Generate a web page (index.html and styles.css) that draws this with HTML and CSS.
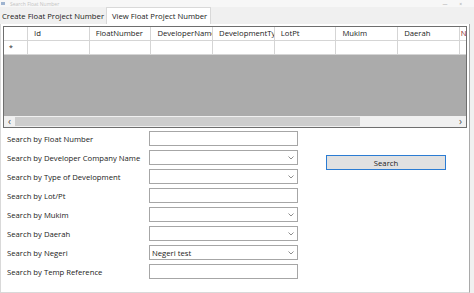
FILE: index.html
```html
<!DOCTYPE html>
<html lang="en">
<head>
<meta charset="UTF-8">
<meta name="viewport" content="width=device-width, initial-scale=1.0">
<title>Search Float Project Number</title>
<link rel="stylesheet" href="styles.css">
</head>
<body>
<div class="titlebar">
    <span class="app-icon"></span>
    <span class="title-text">Search Float Number</span>
    <span class="title-controls">&#8212; &nbsp; &nbsp; &nbsp; &nbsp; &#215;</span>
</div>
<div class="tabs">
    <div class="tab">Create Float Project Number</div>
    <div class="tab active">View Float Project Number</div>
</div>
<div class="page">
    <div class="grid">
        <div class="grid-row header">
            <div class="cell row-head"></div>
            <div class="cell">Id</div>
            <div class="cell">FloatNumber</div>
            <div class="cell">DeveloperName</div>
            <div class="cell">DevelopmentType</div>
            <div class="cell">LotPt</div>
            <div class="cell">Mukim</div>
            <div class="cell">Daerah</div>
            <div class="cell">Negeri</div>
        </div>
        <div class="grid-row">
            <div class="cell row-head">*</div>
            <div class="cell"></div>
            <div class="cell"></div>
            <div class="cell"></div>
            <div class="cell"></div>
            <div class="cell"></div>
            <div class="cell"></div>
            <div class="cell"></div>
            <div class="cell"></div>
        </div>
        <div class="grid-empty"></div>
        <div class="hscroll">
            <span class="arrow">&#8249;</span>
            <div class="track"><div class="thumb"></div></div>
            <span class="arrow">&#8250;</span>
        </div>
    </div>

    <div class="search-area">
        <div class="fields">
            <div class="field">
                <label>Search by Float Number</label>
                <div class="box"></div>
            </div>
            <div class="field">
                <label>Search by Developer Company Name</label>
                <div class="box combo"><span></span><svg width="6" height="4" viewBox="0 0 6 4"><path d="M0.5 0.5 L3 3 L5.5 0.5" fill="none" stroke="#707070" stroke-width="0.8"/></svg></div>
            </div>
            <div class="field">
                <label>Search by Type of Development</label>
                <div class="box combo"><span></span><svg width="6" height="4" viewBox="0 0 6 4"><path d="M0.5 0.5 L3 3 L5.5 0.5" fill="none" stroke="#707070" stroke-width="0.8"/></svg></div>
            </div>
            <div class="field">
                <label>Search by Lot/Pt</label>
                <div class="box"></div>
            </div>
            <div class="field">
                <label>Search by Mukim</label>
                <div class="box combo"><span></span><svg width="6" height="4" viewBox="0 0 6 4"><path d="M0.5 0.5 L3 3 L5.5 0.5" fill="none" stroke="#707070" stroke-width="0.8"/></svg></div>
            </div>
            <div class="field">
                <label>Search by Daerah</label>
                <div class="box combo"><span></span><svg width="6" height="4" viewBox="0 0 6 4"><path d="M0.5 0.5 L3 3 L5.5 0.5" fill="none" stroke="#707070" stroke-width="0.8"/></svg></div>
            </div>
            <div class="field">
                <label>Search by Negeri</label>
                <div class="box combo"><span>Negeri test</span><svg width="6" height="4" viewBox="0 0 6 4"><path d="M0.5 0.5 L3 3 L5.5 0.5" fill="none" stroke="#707070" stroke-width="0.8"/></svg></div>
            </div>
            <div class="field">
                <label>Search by Temp Reference</label>
                <div class="box"></div>
            </div>
        </div>
        <div class="actions">
            <button class="search-button">Search</button>
        </div>
    </div>
</div>
</body>
</html>
```

FILE: styles.css
```css
body {
    font-family: "Open Sans", "Noto Sans", sans-serif;
    font-size: 7.7px;
    color: #1a1a1a;
    margin: 0;
    padding: 0;
    background-color: #f0f0f0;
    width: 474px;
    height: 293px;
    overflow: hidden;
}

.titlebar {
    height: 7px;
    display: flex;
    align-items: center;
    background-color: #f7f7f7;
    color: #c4c4c4;
    font-size: 5px;
    line-height: 6px;
}

.app-icon {
    width: 4px;
    height: 3px;
    margin: 0 5px 0 1px;
    background-color: #9fb4d0;
}

.title-controls {
    margin-left: auto;
    margin-right: 12px;
    color: #a0a0a0;
}

.tabs {
    display: flex;
    align-items: flex-end;
    height: 17px;
}

.tab {
    height: 15px;
    line-height: 15px;
    padding: 0 2px;
    width: 102px;
    white-space: nowrap;
}

.tab.active {
    height: 17px;
    line-height: 17px;
    padding: 0 0 0 5px;
    background-color: #ffffff;
    border: 1px solid #d9d9d9;
    border-bottom: none;
    box-sizing: border-box;
    width: 105px;
}

.page {
    background-color: #ffffff;
    border: 1px solid #d9d9d9;
    border-right: 1px solid #a9a9a9;
    border-top: none;
    width: 470px;
    height: 269px;
    padding: 2px 0 0 2px;
    box-sizing: border-box;
}

.grid {
    width: 464px;
    height: 102px;
    border: 1px solid #6e6e6e;
    box-sizing: border-box;
    display: flex;
    flex-direction: column;
    overflow: hidden;
}

.grid-row {
    display: grid;
    grid-template-columns: 24px repeat(8, 61.7px);
    height: 14px;
    flex-shrink: 0;
    border-bottom: 1px solid #d5d5d5;
    box-sizing: border-box;
    background-color: #ffffff;
}

.cell {
    border-right: 1px solid #d5d5d5;
    padding-left: 6px;
    line-height: 13px;
    white-space: nowrap;
    overflow: hidden;
}

.row-head {
    padding-left: 5px;
    font-size: 7px;
}

.grid-row.header .cell:last-child {
    color: #8a2a2a;
    padding-left: 1px;
}

.grid-empty {
    flex: 1;
    background-color: #ababab;
}

.hscroll {
    height: 11px;
    flex-shrink: 0;
    display: flex;
    align-items: center;
    background-color: #f0f0f0;
}

.arrow {
    width: 11px;
    text-align: center;
    font-size: 10px;
    line-height: 11px;
    color: #505050;
}

.track {
    flex: 1;
    height: 9px;
}

.thumb {
    width: 345px;
    height: 9px;
    background-color: #cdcdcd;
}

.search-area {
    display: flex;
    padding: 3px 0 0 4px;
}

.fields {
    display: flex;
    flex-direction: column;
    gap: 4px;
}

.field {
    display: flex;
    align-items: center;
    height: 15px;
}

.field label {
    width: 142px;
    white-space: nowrap;
}

.box {
    width: 149px;
    height: 15px;
    border: 1px solid #a6a6a6;
    box-sizing: border-box;
    background-color: #ffffff;
}

.combo {
    display: flex;
    align-items: center;
    justify-content: space-between;
    padding: 0 3px 0 2px;
}

.actions {
    padding: 24px 0 0 28px;
}

.search-button {
    width: 120px;
    height: 15px;
    padding: 0;
    font-family: "Open Sans", "Noto Sans", sans-serif;
    font-size: 7.7px;
    color: #1a1a1a;
    background-color: #e1e1e1;
    border: 1px solid #2b7cd3;
}
```
